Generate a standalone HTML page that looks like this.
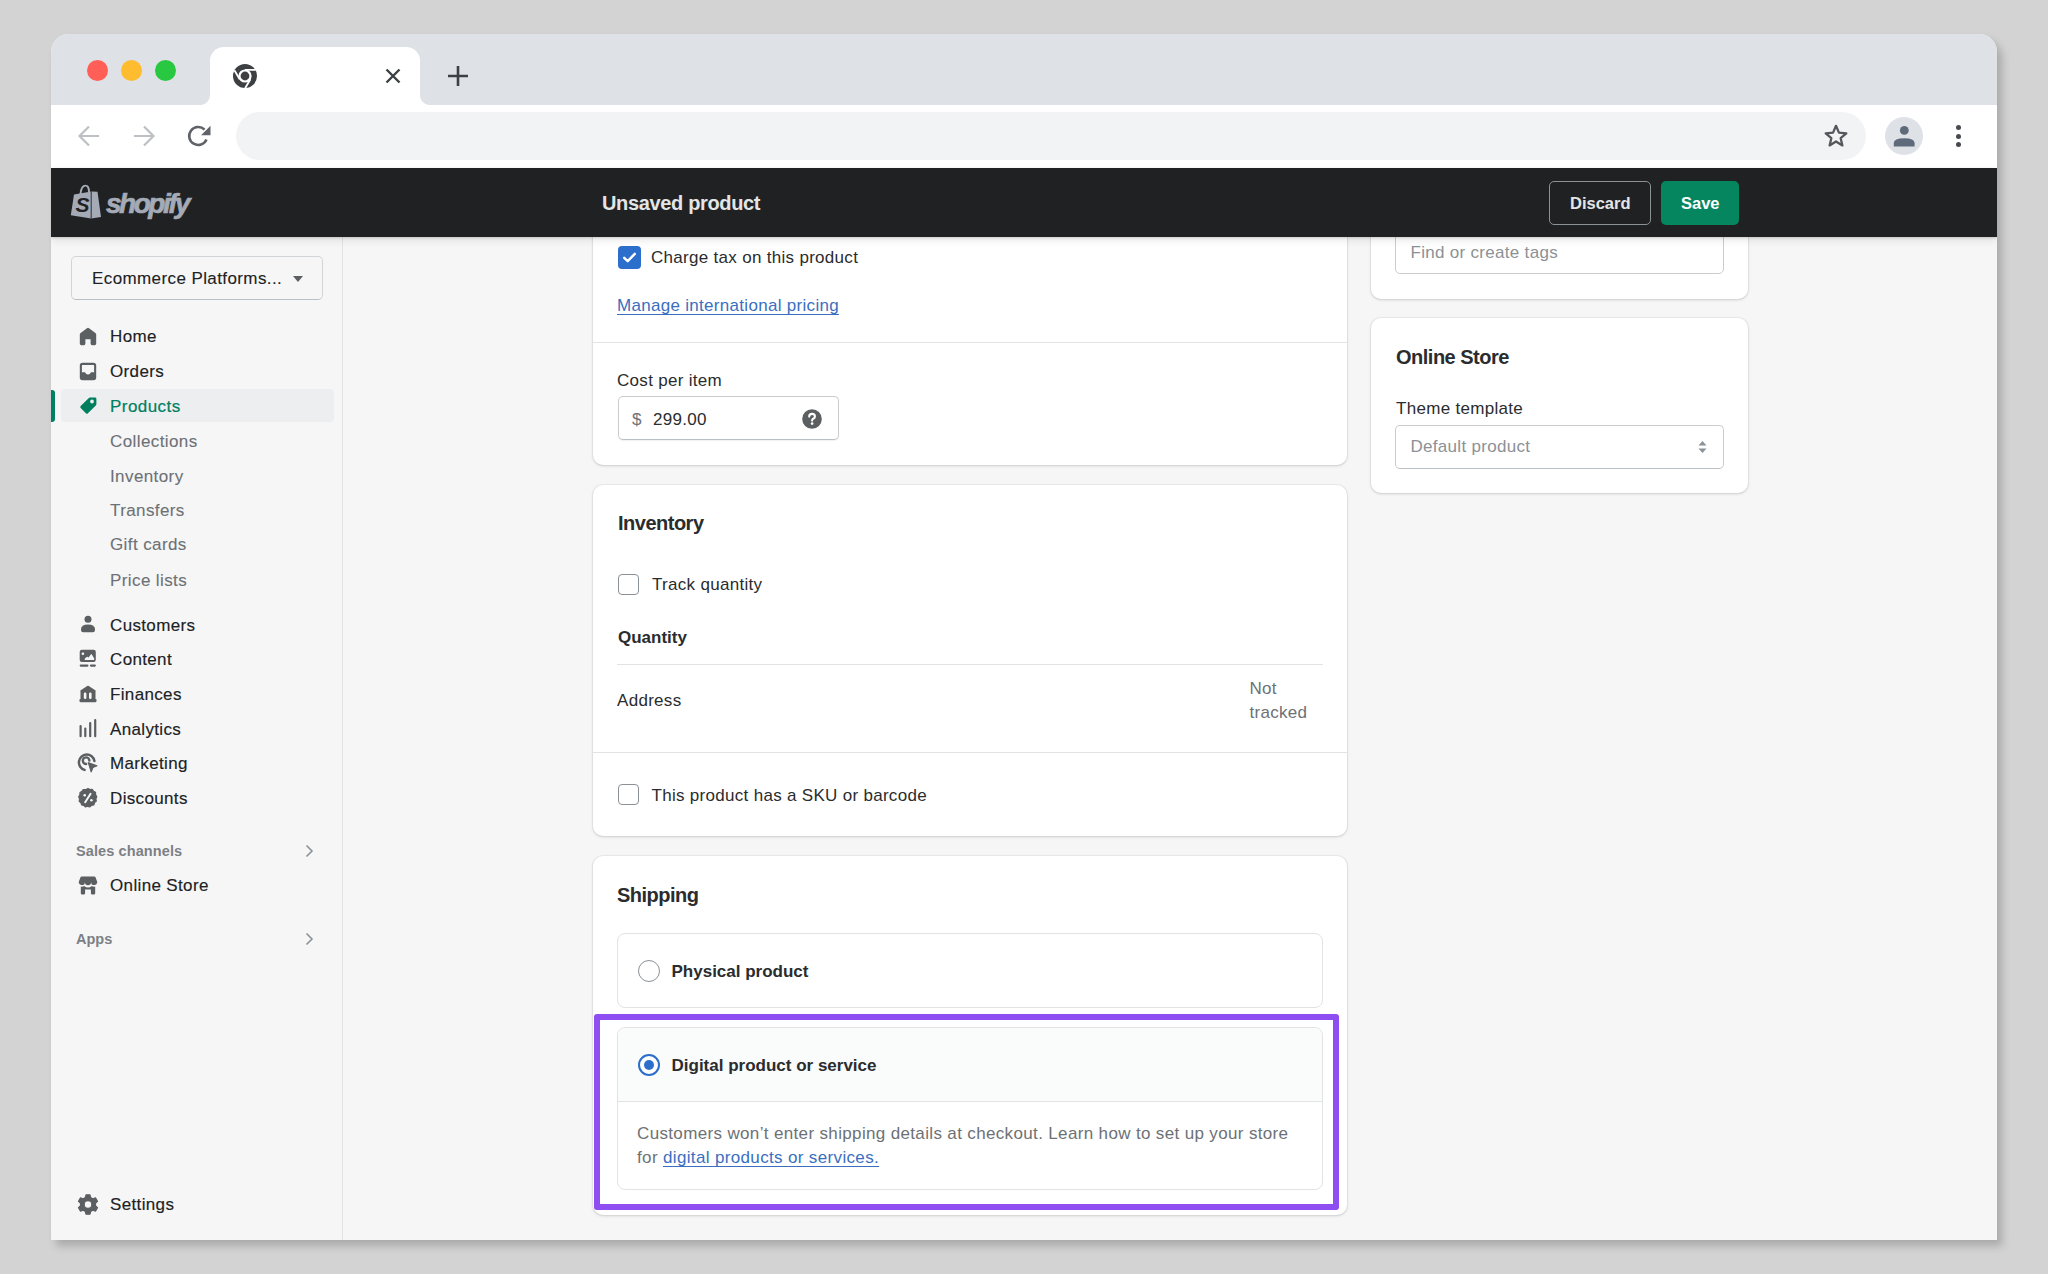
<!DOCTYPE html>
<html><head><meta charset="utf-8">
<style>
*{box-sizing:border-box;margin:0;padding:0}
html,body{width:2048px;height:1274px;overflow:hidden;background:#d3d3d3;font-family:"Liberation Sans",sans-serif;color:#2a2c2e}
.a{position:absolute}
.t{position:absolute;white-space:nowrap;font-size:17px;line-height:17px;letter-spacing:0.3px}
.b{font-weight:700;letter-spacing:0;color:#2a2c2e}
.hd{font-size:20px;line-height:20px;letter-spacing:-0.5px}
#win{position:absolute;left:51px;top:34px;width:1946px;height:1206px;border-radius:18px 18px 0 0;background:#f6f6f7;box-shadow:5px 6px 8px rgba(0,0,0,.2)}
#pg{position:absolute;left:0;top:0;width:2048px;height:1274px;clip-path:inset(34px 51px 34px 51px round 18px 18px 0 0)}
.card{position:absolute;background:#fff;border-radius:10px;box-shadow:0 0 0 1px rgba(63,63,68,.05),0 1px 3px rgba(63,63,68,.18)}
.chk{position:absolute;width:21px;height:21px;border:1.6px solid #8c9196;border-radius:4px;background:#fff}
.nav{color:#202223;-webkit-text-stroke:0.15px #202223;letter-spacing:0.35px}
.sub{color:#6d7175;-webkit-text-stroke:0.1px #6d7175;letter-spacing:0.4px}
.hz{z-index:4}
.ico{position:absolute;left:79px;width:18px;height:18px}
</style></head><body>
<div id="win"></div>
<div id="pg">
  <!-- tab strip -->
  <div class="a" style="left:51px;top:34px;width:1946px;height:71px;background:#dee1e6"></div>
  <div class="a" style="left:87px;top:60px;width:21px;height:21px;border-radius:50%;background:#ff5f57"></div>
  <div class="a" style="left:121px;top:60px;width:21px;height:21px;border-radius:50%;background:#febc2e"></div>
  <div class="a" style="left:155px;top:60px;width:21px;height:21px;border-radius:50%;background:#28c840"></div>
  <!-- active tab -->
  <div class="a" style="left:210px;top:47px;width:210px;height:58px;background:#fff;border-radius:14px 14px 0 0"></div>
  <div class="a" style="left:200px;top:95px;width:10px;height:10px;background:radial-gradient(circle at 0 0,#dee1e6 9.5px,#fff 10.5px)"></div>
  <div class="a" style="left:420px;top:95px;width:10px;height:10px;background:radial-gradient(circle at 100% 0,#dee1e6 9.5px,#fff 10.5px)"></div>
  <!-- toolbar -->
  <div class="a" style="left:51px;top:105px;width:1946px;height:63px;background:#fff"></div>
  <div class="a" style="left:236px;top:112px;width:1630px;height:48px;background:#f1f3f4;border-radius:24px"></div>

  <!-- chrome icons -->
  <svg class="a" style="left:231.5px;top:63.2px" width="26" height="26" viewBox="0 0 26 26">
    <circle cx="13" cy="13" r="12" fill="#3c4043"/>
    <circle cx="13" cy="13" r="6.6" fill="#fff"/>
    <circle cx="13" cy="13" r="4.4" fill="#3c4043"/>
    <path d="M13 6.9 L23.6 6.9 M7.7 16.3 L2.4 7.2 M18.4 16.2 L13.1 25.3" stroke="#fff" stroke-width="1.8"/>
  </svg>
  <svg class="a" style="left:385px;top:68px" width="16" height="16" viewBox="0 0 16 16"><path d="M1.5 1.5L14.5 14.5M14.5 1.5L1.5 14.5" stroke="#3c4043" stroke-width="2.4"/></svg>
  <svg class="a" style="left:447px;top:65px" width="22" height="22" viewBox="0 0 22 22"><path d="M11 1V21M1 11H21" stroke="#3c4043" stroke-width="2.6"/></svg>
  <svg class="a" style="left:77px;top:124px" width="24" height="24" viewBox="0 0 24 24"><path d="M22 12H3.5M12 2.5L2.5 12L12 21.5" fill="none" stroke="#bdc1c6" stroke-width="2.2"/></svg>
  <svg class="a" style="left:132px;top:124px" width="24" height="24" viewBox="0 0 24 24"><path d="M2 12H20.5M12 2.5L21.5 12L12 21.5" fill="none" stroke="#bdc1c6" stroke-width="2.2"/></svg>
  <svg class="a" style="left:186px;top:124px" width="26" height="26" viewBox="0 0 26 26"><path d="M20.5 15.5A9 9 0 1 1 18.6 5.6" fill="none" stroke="#5f6368" stroke-width="2.6"/><path d="M24.5 1.8V11.2H15.1Z" fill="#5f6368"/></svg>
  <svg class="a" style="left:1823px;top:123px" width="26" height="26" viewBox="0 0 24 24"><path d="M12 2.6l2.7 6.3 6.8.6-5.2 4.5 1.6 6.7L12 17.1l-5.9 3.6 1.6-6.7-5.2-4.5 6.8-.6z" fill="none" stroke="#54575b" stroke-width="2.1" stroke-linejoin="round"/></svg>
  <div class="a" style="left:1885px;top:117px;width:38px;height:38px;border-radius:50%;background:#dee1e6"></div>
  <svg class="a" style="left:1892px;top:124px" width="24" height="24" viewBox="0 0 24 24"><circle cx="12.3" cy="6.4" r="4.4" fill="#5f6b7a"/><path d="M1.8 22.4V19.2Q1.8 14.3 12.2 14.3Q22.6 14.3 22.6 19.2V22.4Z" fill="#5f6b7a"/></svg>
  <div class="a" style="left:1956px;top:125px;width:5px;height:5px;border-radius:50%;background:#474a4e"></div>
  <div class="a" style="left:1956px;top:133.5px;width:5px;height:5px;border-radius:50%;background:#474a4e"></div>
  <div class="a" style="left:1956px;top:142px;width:5px;height:5px;border-radius:50%;background:#474a4e"></div>

  <!-- main cards -->
  <div class="card" style="left:593px;top:180px;width:754px;height:285px"></div>
  <div class="a" style="left:593px;top:342px;width:754px;height:1px;background:#e1e3e5"></div>
  <div class="a" style="left:618px;top:246px;width:22.5px;height:22.5px;border-radius:4px;background:#2c6ecb"></div>
  <svg class="a" style="left:618px;top:246px" width="23" height="23" viewBox="0 0 23 23"><path d="M6.2 11.8L9.7 15.2L16.8 7.8" fill="none" stroke="#fff" stroke-width="2.4" stroke-linecap="round" stroke-linejoin="round"/></svg>
  <div class="t" style="left:651px;top:248.8px">Charge tax on this product</div>
  <div class="t" style="left:617px;top:297.4px;color:#3a6fc0;text-decoration:underline;text-underline-offset:2.5px">Manage international pricing</div>
  <div class="t" style="left:617px;top:371.6px">Cost per item</div>
  <div class="a" style="left:617.5px;top:396px;width:221.5px;height:44px;border:1px solid #c9cccf;border-bottom-color:#babfc3;border-radius:5px;background:#fff;box-shadow:0 1px 1px rgba(0,0,0,.06)"></div>
  <div class="t" style="left:632px;top:411.1px;color:#6d7175">$</div>
  <div class="t" style="left:653px;top:411.1px">299.00</div>
  <svg class="a" style="left:802px;top:409px" width="20" height="20" viewBox="0 0 20 20"><circle cx="10" cy="10" r="9.8" fill="#5c5f62"/><path d="M7.2 7.6Q7.2 4.9 10.1 4.9Q12.9 4.9 12.9 7.4Q12.9 8.9 11.2 9.7Q10.1 10.3 10.1 11.6" fill="none" stroke="#fff" stroke-width="2.1" stroke-linecap="round"/><circle cx="10.1" cy="14.6" r="1.35" fill="#fff"/></svg>

  <div class="card" style="left:593px;top:485px;width:754px;height:351px"></div>
  <div class="t b hd" style="left:618px;top:513.3px">Inventory</div>
  <div class="chk" style="left:618px;top:573.5px"></div>
  <div class="t" style="left:652px;top:576.1px">Track quantity</div>
  <div class="t b" style="left:618px;top:629.4px">Quantity</div>
  <div class="a" style="left:617px;top:664px;width:706px;height:1px;background:#e1e3e5"></div>
  <div class="t" style="left:617px;top:692px">Address</div>
  <div class="t" style="left:1249.5px;top:679.8px;color:#6d7175">Not</div>
  <div class="t" style="left:1249.5px;top:703.8px;color:#6d7175">tracked</div>
  <div class="a" style="left:593px;top:752px;width:754px;height:1px;background:#e1e3e5"></div>
  <div class="chk" style="left:618px;top:784px"></div>
  <div class="t" style="left:651.5px;top:786.6px">This product has a SKU or barcode</div>

  <div class="card" style="left:593px;top:856px;width:754px;height:359px"></div>
  <div class="t b hd" style="left:617px;top:884.8px">Shipping</div>
  <div class="a" style="left:617px;top:933px;width:706px;height:75px;border:1px solid #e1e3e5;border-radius:8px;background:#fff"></div>
  <div class="a" style="left:638px;top:959.5px;width:22px;height:22px;border:1.6px solid #8c9196;border-radius:50%;background:#fff"></div>
  <div class="t b" style="left:671.5px;top:962.6px">Physical product</div>
  <div class="a" style="left:617px;top:1027px;width:706px;height:163px;border:1px solid #e1e3e5;border-radius:8px;background:#fff;overflow:hidden"><div class="a" style="left:0;top:0;width:706px;height:74px;background:#fafbfb;border-bottom:1px solid #e1e3e5"></div></div>
  <div class="a" style="left:638px;top:1053.5px;width:22px;height:22px;border:2px solid #2c6ecb;border-radius:50%;background:#fff"></div>
  <div class="a" style="left:644px;top:1059.5px;width:10px;height:10px;border-radius:50%;background:#2c6ecb"></div>
  <div class="t b" style="left:671.5px;top:1056.6px">Digital product or service</div>
  <div class="t" style="left:637px;top:1124.6px;color:#6d7175;letter-spacing:0.35px">Customers won’t enter shipping details at checkout. Learn how to set up your store</div>
  <div class="t" style="left:637px;top:1149.3px;color:#6d7175;letter-spacing:0.35px">for <span style="color:#3a6fc0;text-decoration:underline;text-underline-offset:2.5px">digital products or services.</span></div>
  <div class="a" style="left:593.5px;top:1013.5px;width:745px;height:196.5px;border:6.5px solid #8e4ef2;border-radius:3px"></div>

  <!-- right column -->
  <div class="card" style="left:1371px;top:180px;width:377px;height:118.5px"></div>
  <div class="a" style="left:1395px;top:200px;width:328.5px;height:73.5px;border:1px solid #c9cccf;border-radius:5px;background:#fff"></div>
  <div class="t" style="left:1410.5px;top:243.6px;color:#8c9196">Find or create tags</div>
  <div class="card" style="left:1371px;top:318px;width:377px;height:175px"></div>
  <div class="t b hd" style="left:1396px;top:347.3px">Online Store</div>
  <div class="t" style="left:1396px;top:399.7px">Theme template</div>
  <div class="a" style="left:1395px;top:424.5px;width:328.5px;height:44px;border:1px solid #c9cccf;border-bottom-color:#babfc3;border-radius:5px;background:#fff"></div>
  <div class="t" style="left:1410.5px;top:438.4px;color:#8c9196">Default product</div>
  <svg class="a" style="left:1697px;top:440px" width="11" height="14" viewBox="0 0 11 14"><path d="M5.5 1L9.5 5.5H1.5Z M5.5 13L9.5 8.5H1.5Z" fill="#8c9196"/></svg>
  <!-- header -->
  <div class="a" style="left:51px;top:168px;width:1946px;height:69px;background:#202123;z-index:3;box-shadow:0 1px 2px rgba(0,0,0,.12),0 3px 8px rgba(0,0,0,.1)"></div>
  <!-- shopify header content -->
  <svg class="a hz" style="left:70px;top:184px" width="32" height="35" viewBox="0 0 32 35">
    <path d="M4 10.5 L21.5 7.5 L27.5 7.8 L31 33 L21.2 34.5 L0.8 31.2 Z" fill="#a4abb6"/>
    <path d="M21.2 7.6 L21.2 34.5" stroke="#202123" stroke-width="0.9"/>
    <path d="M10.5 10 C11 5 13 1.8 15.5 1.8 C18 1.8 19 5 19 8" fill="none" stroke="#a4abb6" stroke-width="2"/>
    <path d="M13 5 C14 3 15.5 2.5 17 3.5" fill="none" stroke="#202123" stroke-width="0.8"/>
    <text x="5.5" y="28" font-family="Liberation Sans" font-weight="700" font-style="italic" font-size="21" fill="#202123">S</text>
  </svg>
  <div class="t hz" style="left:106px;top:190px;font-size:28px;line-height:28px;font-weight:700;font-style:italic;color:#a4abb6;letter-spacing:-2.5px;-webkit-text-stroke:0.7px #a4abb6">shopify</div>
  <div class="t hz b" style="left:602px;top:193px;font-size:20px;line-height:20px;color:#e3e5e7;letter-spacing:-0.35px">Unsaved product</div>
  <div class="a hz" style="left:1549px;top:181px;width:102px;height:44px;border:1.5px solid #8c9196;border-radius:5px;background:#202123"></div>
  <div class="t hz b" style="left:1570px;top:195px;font-size:16.5px;line-height:16.5px;color:#e3e5e7">Discard</div>
  <div class="a hz" style="left:1661px;top:181px;width:78px;height:44px;border-radius:5px;background:#06865f"></div>
  <div class="t hz b" style="left:1681px;top:195px;font-size:16.5px;line-height:16.5px;color:#fff">Save</div>

  <!-- sidebar -->
  <div class="a" style="left:51px;top:237px;width:292px;height:1003px;background:#f6f6f7;border-right:1px solid #e1e3e5"></div>


  <!-- sidebar content -->
  <div class="a" style="left:71px;top:256px;width:252px;height:44px;border:1px solid #d2d5d8;border-bottom-color:#babfc3;border-radius:5px;background:#f6f6f7"></div>
  <div class="t" style="left:92px;top:270px;color:#202223;letter-spacing:0.4px;-webkit-text-stroke:0.1px #202223">Ecommerce Platforms...</div>
  <svg class="a" style="left:292px;top:275px" width="12" height="8" viewBox="0 0 12 8"><path d="M1 1H11L6 7Z" fill="#5c5f62"/></svg>
  <div class="a" style="left:61px;top:389px;width:273px;height:33px;border-radius:4px;background:#edeeef"></div>
  <div class="a" style="left:51px;top:390px;width:3.5px;height:32px;border-radius:0 3px 3px 0;background:#008060"></div>
  <div class="t nav" style="left:110px;top:328.3px">Home</div>
  <div class="t nav" style="left:110px;top:363.4px">Orders</div>
  <div class="t" style="left:110px;top:398px;color:#007f5f;-webkit-text-stroke:0.2px #007f5f;letter-spacing:0.45px">Products</div>
  <div class="t sub" style="left:110px;top:432.9px">Collections</div>
  <div class="t sub" style="left:110px;top:467.9px">Inventory</div>
  <div class="t sub" style="left:110px;top:501.6px">Transfers</div>
  <div class="t sub" style="left:110px;top:536.4px">Gift cards</div>
  <div class="t sub" style="left:110px;top:571.6px">Price lists</div>
  <div class="t nav" style="left:110px;top:616.6px">Customers</div>
  <div class="t nav" style="left:110px;top:651.1px">Content</div>
  <div class="t nav" style="left:110px;top:685.9px">Finances</div>
  <div class="t nav" style="left:110px;top:720.6px">Analytics</div>
  <div class="t nav" style="left:110px;top:755.1px">Marketing</div>
  <div class="t nav" style="left:110px;top:789.6px">Discounts</div>
  <div class="t b" style="left:76px;top:844px;font-size:14.5px;line-height:14.5px;color:#7c8085;letter-spacing:0.1px">Sales channels</div>
  <svg class="a" style="left:303px;top:844px" width="12" height="14" viewBox="0 0 12 14"><path d="M3.5 1.5L9 7L3.5 12.5" fill="none" stroke="#8c9196" stroke-width="1.6"/></svg>
  <div class="t nav" style="left:110px;top:877.1px">Online Store</div>
  <div class="t b" style="left:76px;top:932px;font-size:14.5px;line-height:14.5px;color:#7c8085">Apps</div>
  <svg class="a" style="left:303px;top:932px" width="12" height="14" viewBox="0 0 12 14"><path d="M3.5 1.5L9 7L3.5 12.5" fill="none" stroke="#8c9196" stroke-width="1.6"/></svg>
  <div class="t nav" style="left:110px;top:1196.2px">Settings</div>
  <!-- sidebar icons -->
  <svg class="a" style="left:78px;top:327px" width="20" height="19" viewBox="0 0 20 19"><path d="M9 1.2Q10 0.5 11 1.2L17.4 5.9Q18.2 6.5 18.2 7.5V16.6Q18.2 18.2 16.6 18.2H14.2Q12.6 18.2 12.6 16.6V12.3H7.4V16.6Q7.4 18.2 5.8 18.2H3.4Q1.8 18.2 1.8 16.6V7.5Q1.8 6.5 2.6 5.9Z" fill="#5c5f62"/></svg>
  <svg class="a" style="left:78px;top:362px" width="20" height="19" viewBox="0 0 20 19"><path d="M4.5 0.8H15.5Q18.2 0.8 18.2 3.5V15.5Q18.2 18.2 15.5 18.2H4.5Q1.8 18.2 1.8 15.5V3.5Q1.8 0.8 4.5 0.8Z M4.4 3.1Q3.9 3.1 3.9 3.6V10.2H7Q7.9 12.6 10 12.6Q12.1 12.6 13 10.2H16.1V3.6Q16.1 3.1 15.6 3.1Z" fill="#5c5f62" fill-rule="evenodd"/></svg>
  <svg class="a" style="left:78px;top:396px" width="20" height="20" viewBox="0 0 20 20"><path d="M10.6 2.2Q11.2 1.6 12 1.6H17.1Q18.4 1.6 18.4 2.9V8Q18.4 8.8 17.8 9.4L9.9 17.3Q8.9 18.3 7.9 17.3L2.7 12.1Q1.7 11.1 2.7 10.1Z M14 3.6A1.9 1.9 0 1 0 14 7.4A1.9 1.9 0 1 0 14 3.6Z" fill="#007f5f" fill-rule="evenodd"/></svg>
  <svg class="a" style="left:78px;top:614px" width="20" height="20" viewBox="0 0 20 20"><circle cx="10" cy="5.2" r="3.5" fill="#5c5f62"/><path d="M3 15.2Q3 10.4 10 10.4Q17 10.4 17 15.2V16Q17 18.2 14.8 18.2H5.2Q3 18.2 3 16Z" fill="#5c5f62"/></svg>
  <svg class="a" style="left:78px;top:648px" width="20" height="20" viewBox="0 0 20 20"><rect x="1.7" y="1.8" width="16.1" height="12.2" rx="2.2" fill="#5c5f62"/><circle cx="4.9" cy="5.7" r="1.3" fill="#f6f6f7"/><path d="M6.6 12.1Q6.6 10.4 8 9.6L9.4 8.8L10.6 9.6L12.8 6.4Q13.3 5.8 13.8 6.4L16.1 10.2Q16.6 12.1 15.6 12.1Z" fill="#f6f6f7"/><path d="M2.8 17.6H9.4M13 17.6H16.8" stroke="#5c5f62" stroke-width="2.3" stroke-linecap="round"/></svg>
  <svg class="a" style="left:78px;top:683px" width="20" height="20" viewBox="0 0 20 20"><path d="M9.2 2.9Q10 2.4 10.8 2.9L17.6 7.6Q18.2 8.1 17.5 8.2V16.1H18Q18.6 16.1 18.6 17.6Q18.6 19.2 17.5 19.2H2.5Q1.4 19.2 1.4 17.6Q1.4 16.1 2 16.1H2.5V8.2Q1.8 8.1 2.4 7.6Z M7.1 9.4Q5.8 9.4 5.8 10.7V14.8Q5.8 16.1 7.1 16.1Q8.4 16.1 8.4 14.8V10.7Q8.4 9.4 7.1 9.4Z M12.3 9.4Q11 9.4 11 10.7V14.8Q11 16.1 12.3 16.1Q13.6 16.1 13.6 14.8V10.7Q13.6 9.4 12.3 9.4Z" fill="#5c5f62" fill-rule="evenodd"/></svg>
  <svg class="a" style="left:78px;top:718px" width="20" height="20" viewBox="0 0 20 20"><path d="M2.6 8V18.2M7.3 10.5V18.2M12.2 5V18.2M17.2 2V18.2" stroke="#5c5f62" stroke-width="2.2" stroke-linecap="round"/></svg>
  <svg class="a" style="left:77px;top:752px" width="22" height="22" viewBox="0 0 22 22"><path d="M7.6 17.9A7.8 7.8 0 1 1 17.4 9" fill="none" stroke="#5c5f62" stroke-width="2.5" stroke-linecap="round"/><path d="M9.2 12A3.3 3.3 0 1 1 12.4 8.6" fill="none" stroke="#5c5f62" stroke-width="2.4" stroke-linecap="round"/><path d="M11.2 10.5L20.2 13.8L16 15.6L14.2 20.2Z" fill="#5c5f62" stroke="#5c5f62" stroke-width="1" stroke-linejoin="round"/></svg>
  <svg class="a" style="left:77px;top:787px" width="22" height="22" viewBox="0 0 22 22"><path d="M11 1.5L13 2.6L15.3 2.4L16.5 4.3L18.5 5.4L18.6 7.7L19.8 9.7L18.9 11.8L19.3 14.1L17.6 15.6L16.9 17.8L14.6 18.3L12.9 19.9L10.7 19.3L8.5 20L6.8 18.4L4.6 17.9L3.9 15.7L2.2 14.2L2.6 11.9L1.7 9.8L2.9 7.8L3 5.5L5 4.4L6.2 2.5L8.5 2.7Z" fill="#5c5f62" stroke="#5c5f62" stroke-width="1.2" stroke-linejoin="round"/><path d="M13.6 6.8L8.2 15.2" stroke="#f6f6f7" stroke-width="2" stroke-linecap="round"/><circle cx="7.7" cy="8.3" r="1.3" fill="#f6f6f7"/><circle cx="14.4" cy="13.2" r="1.3" fill="#f6f6f7"/></svg>
  <svg class="a" style="left:78px;top:875px" width="20" height="20" viewBox="0 0 20 20"><path d="M3.6 1.6H16.4Q17.2 1.6 17.6 2.4L19.2 6.8A3.05 3.05 0 0 1 13.05 7.2A3.05 3.05 0 0 1 6.95 7.2A3.05 3.05 0 0 1 0.8 6.8L2.4 2.4Q2.8 1.6 3.6 1.6Z" fill="#5c5f62"/><path d="M2.8 11.6Q4.8 11.9 6.1 10.9Q8 12.5 10 12.5Q12 12.5 13.9 10.9Q15.2 11.9 17.2 11.6V18.3Q17.2 19.6 15.9 19.6H14.2Q12.9 19.6 12.9 18.3V14.4H7.1V18.3Q7.1 19.6 5.8 19.6H4.1Q2.8 19.6 2.8 18.3Z" fill="#5c5f62"/></svg>
  <svg class="a" style="left:77px;top:1194px" width="22" height="21" viewBox="0 0 22 21"><path d="M9 0.8H13L13.6 3.4L15.9 4.7L18.5 3.9L20.5 7.4L18.5 9.2V11.8L20.5 13.6L18.5 17.1L15.9 16.3L13.6 17.6L13 20.2H9L8.4 17.6L6.1 16.3L3.5 17.1L1.5 13.6L3.5 11.8V9.2L1.5 7.4L3.5 3.9L6.1 4.7L8.4 3.4Z M11 6.7A3.8 3.8 0 1 0 11 14.3A3.8 3.8 0 1 0 11 6.7Z" fill="#5c5f62" fill-rule="evenodd" stroke="#5c5f62" stroke-width="1.2" stroke-linejoin="round"/></svg>
</div>
</body></html>
